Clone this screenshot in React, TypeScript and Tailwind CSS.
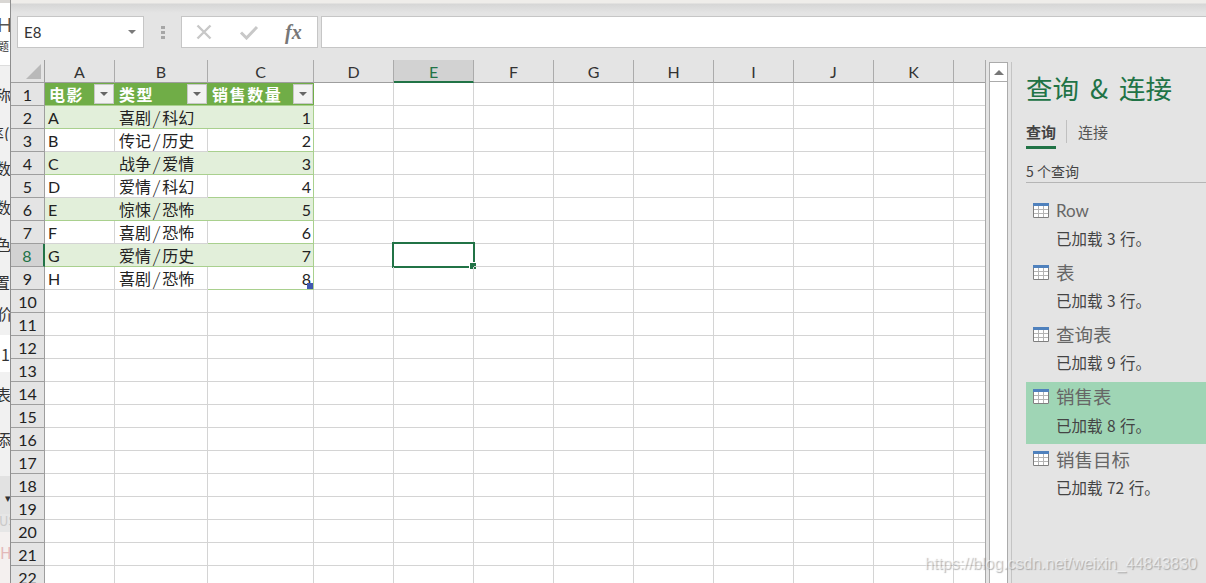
import React from 'react';

const FONT = "font-['Lato','Noto_Sans_CJK_SC',sans-serif]";
const YAHEI = "font-['Noto_Sans_CJK_SC','Noto_Sans',sans-serif]";

const movies = [
  ['A', '喜剧', '科幻', 1],
  ['B', '传记', '历史', 2],
  ['C', '战争', '爱情', 3],
  ['D', '爱情', '科幻', 4],
  ['E', '惊悚', '恐怖', 5],
  ['F', '喜剧', '恐怖', 6],
  ['G', '爱情', '历史', 7],
  ['H', '喜剧', '恐怖', 8],
] as const;

const colLetters = ['A', 'B', 'C', 'D', 'E', 'F', 'G', 'H', 'I', 'J', 'K', ''];

const queries = [
  { name: 'Row', rows: 3 },
  { name: '表', rows: 3 },
  { name: '查询表', rows: 9 },
  { name: '销售表', rows: 8, active: true },
  { name: '销售目标', rows: 72 },
];

// sliver of the window behind Excel, only the cut off edge is visible
const sliver = [
  { h: 'h-[3px]', bg: 'bg-[#d9d7d4]', text: '', cls: '' },
  { h: 'h-[38px]', bg: 'bg-white', text: 'H', cls: "text-[21px] text-[#555] items-end -ml-[3px] pb-[6px] font-['Liberation_Sans',sans-serif]" },
  { h: 'h-[25px]', bg: 'bg-white border-b border-[#ddd]', text: '题', cls: 'text-[11px] text-[#333] -ml-[2px] pb-[8px]' },
  { h: 'h-[37px]', bg: 'bg-[#f1f1f1]', text: '称', cls: 'text-[16px] text-[#333] -ml-[5px] items-end' },
  { h: 'h-[38px]', bg: 'bg-[#f1f1f1]', text: '率(', cls: 'text-[16px] text-[#333] -ml-[12px] items-end' },
  { h: 'h-[35px]', bg: 'bg-[#f1f1f1]', text: '数', cls: 'text-[16px] text-[#333] items-end -ml-[5px]' },
  { h: 'h-[39px]', bg: 'bg-[#f1f1f1]', text: '数', cls: 'text-[16px] text-[#333] items-end -ml-[5px]' },
  { h: 'h-[37px]', bg: 'bg-[#f1f1f1]', text: '色', cls: 'text-[16px] text-[#333] -ml-[5px] items-end' },
  { h: 'h-[38px]', bg: 'bg-[#f1f1f1]', text: '置', cls: 'text-[16px] text-[#333] -ml-[6px] items-end' },
  { h: 'h-[45px]', bg: 'bg-[#f1f1f1]', text: '价', cls: 'text-[16px] text-[#333] items-end -ml-[3px] pb-[14px]' },
  { h: 'h-[37px]', bg: 'bg-white', text: '1', cls: 'text-[16px] text-[#333] -ml-[3px] items-center justify-end' },
  { h: 'h-[30px]', bg: 'bg-[#f1f1f1]', text: '表', cls: 'text-[16px] text-[#333] -ml-[5px] items-end' },
  { h: 'h-[74px]', bg: 'bg-[#f1f1f1]', text: '添', cls: 'text-[16px] text-[#333] -ml-[5px] items-end pb-[29px]' },
  { h: 'h-[38px]', bg: 'bg-[#e2e2e2]', text: '▾', cls: 'text-[11px] text-[#333] pl-[5px] pt-[16px]' },
  { h: 'h-[18px]', bg: 'bg-[#e6e6e6]', text: 'US', cls: 'text-[13px] text-[#c9c9c9] -ml-[1px]' },
  { h: 'h-[51px]', bg: 'bg-[#f4f0ef]', text: 'H', cls: 'text-[16px] text-[#e3b9b9] pt-[12px]' },
];

function Sliver() {
  return (
    <div className={`w-[11px] h-full shrink-0 flex flex-col overflow-hidden border-r border-[#8e8e8e] ${YAHEI}`}>
      {sliver.map((s, i) => (
        <div key={i} className={`${s.h} ${s.bg} shrink-0 overflow-hidden`}>
          <div className={`flex h-full whitespace-nowrap leading-none ${s.cls}`}>{s.text}</div>
        </div>
      ))}
    </div>
  );
}

function TableIcon() {
  return (
    <svg width="16" height="15" viewBox="0 0 16 15" className="shrink-0">
      <rect x="0" y="0" width="16" height="15" fill="#fff" />
      <path d="M5.5 3v11M10.5 3v11M1 6.5h14M1 10.5h14" fill="none" stroke="#b4b4b4" />
      <path d="M.5 3v11.5h15V3" fill="none" stroke="#7f7f7f" />
      <rect x="0" y="0" width="16" height="3" fill="#4f81bd" />
    </svg>
  );
}

function FilterButton() {
  return (
    <div className="w-[20px] h-[20px] bg-[#f2f2f2] border border-[#c8c8c8] flex items-center justify-center shrink-0">
      <div className="w-0 h-0 border-l-[4px] border-r-[4px] border-t-[4px] border-l-transparent border-r-transparent border-t-[#666]" />
    </div>
  );
}

function FormulaBar() {
  return (
    <div className="h-[60px] shrink-0 bg-[#e4e4e4] flex flex-col">
      <div className="h-[16px] shrink-0 bg-[linear-gradient(to_bottom,#efedea_0,#efedea_3px,#d6d6d6_4px,#e4e4e4_13px)]" />
      <div className="h-[32px] flex items-stretch pl-[6px]">
        <div className={`w-[127px] bg-white border border-[#c6c6c6] flex items-center justify-between pl-[6px] pr-[7px] text-[15px] text-[#333] ${FONT}`}>
          E8
          <div className="w-0 h-0 border-l-[4px] border-r-[4px] border-t-[4px] border-l-transparent border-r-transparent border-t-[#7a7a7a]" />
        </div>
        <div className="w-[37px] flex flex-col items-center justify-center gap-[2px]">
          <span className="w-[4px] h-[3px] bg-[#a6a6a6]" />
          <span className="w-[4px] h-[3px] bg-[#a6a6a6]" />
          <span className="w-[4px] h-[3px] bg-[#a6a6a6]" />
        </div>
        <div className="w-[137px] bg-white border border-[#c6c6c6] flex items-center pl-[14px]">
          <svg width="16" height="16" viewBox="0 0 16 16" className="shrink-0">
            <path d="M1.5 1.5 14.5 14.5M14.5 1.5 1.5 14.5" stroke="#c8c8c8" strokeWidth="2.4" fill="none" />
          </svg>
          <svg width="20" height="16" viewBox="0 0 20 16" className="ml-[27px] shrink-0">
            <path d="M2 8.5 7.5 14 18 3" stroke="#c8c8c8" strokeWidth="3" fill="none" />
          </svg>
          <span className="ml-[26px] font-['Liberation_Serif',serif] italic font-bold text-[20px] leading-none text-[#777]">fx</span>
        </div>
        <div className="ml-[3px] flex-1 bg-white border-y border-l border-[#c6c6c6]" />
      </div>
    </div>
  );
}

function Sheet() {
  const rowNums = Array.from({ length: 22 }, (_, i) => i + 1);
  return (
    <div className={`w-[975px] h-full shrink-0 grid grid-cols-[34px_70px_93px_106px_repeat(8,80px)_32px] auto-rows-[23px] bg-white border-r border-[#a9a9a9] text-[16px] text-[#222] leading-none overflow-hidden ${FONT}`}>
      {/* column header row */}
      <div className="bg-[#e4e4e4] border-r border-b border-[#9e9e9e] flex items-end justify-end pr-[3px] pb-[3px]">
        <div className="w-0 h-0 border-l-[15px] border-t-[15px] border-l-transparent border-t-transparent border-r-[15px] border-r-[#b9b9b9]" />
      </div>
      {colLetters.map((c, i) => (
        <div
          key={i}
          className={
            c === 'E'
              ? 'bg-[#d2d2d2] border-r border-[#ababab] border-b-2 border-b-[#217346] text-[#217346] flex items-center justify-center pt-[2px]'
              : 'bg-[#e4e4e4] border-r border-[#ababab] border-b border-b-[#9e9e9e] text-[#333] flex items-center justify-center pt-[2px]'
          }
        >
          {c}
        </div>
      ))}

      {rowNums.map((n) => {
        const movie = movies[n - 2];
        const band = n >= 2 && n <= 9 && n % 2 === 0;
        const inTable = n >= 1 && n <= 9;
        const tableCell = band
          ? 'bg-[#e2efda] border-b border-[#a9d08e]'
          : inTable
            ? 'bg-white border-b border-[#a9d08e]'
            : 'bg-white border-b border-[#d4d4d4]';
        const inner = band ? '' : 'border-r border-[#d4d4d4]';
        return (
          <React.Fragment key={n}>
            <div
              className={
                n === 8
                  ? 'bg-[#d2d2d2] border-b border-[#9e9e9e] border-r-2 border-r-[#217346] text-[#217346] flex items-center justify-center pt-[2px]'
                  : 'bg-[#e4e4e4] border-r border-b border-[#9e9e9e] text-[#222] flex items-center justify-center pt-[2px]'
              }
            >
              {n}
            </div>
            {n === 1 ? (
              <>
                {['电影', '类型', '销售数量'].map((h) => (
                  <div key={h} className="bg-[#70ad47] border-b border-[#a9d08e] flex items-center justify-between pl-[4px] pr-[1px] text-white font-bold tracking-[1.6px]">
                    <span className="pt-[2px]">{h}</span>
                    <FilterButton />
                  </div>
                ))}
              </>
            ) : movie ? (
              <>
                <div className={`${tableCell} ${inner} flex items-center pl-[3px] pt-[2px]`}>{movie[0]}</div>
                <div className={`${tableCell} ${inner} flex items-center pl-[4px] pt-[2px]`}>
                  {movie[1]}
                  <span className="mx-[1px] text-[21px] font-light">/</span>
                  {movie[2]}
                </div>
                <div className={`${tableCell} border-r border-r-[#a9d08e] relative flex items-center justify-end pr-[2px] pt-[2px]`}>
                  {movie[3]}
                  {n === 9 && <span className="absolute right-0 bottom-0 w-[6px] h-[6px] bg-[#4058b0]" />}
                </div>
              </>
            ) : (
              <>
                <div className="border-r border-b border-[#d4d4d4]" />
                <div className="border-r border-b border-[#d4d4d4]" />
                <div className="border-r border-b border-[#d4d4d4]" />
              </>
            )}
            {colLetters.slice(3).map((c) => (
              <div key={c} className="border-r border-b border-[#d4d4d4] relative">
                {c === 'E' && n === 8 && (
                  <>
                    <div className="absolute -left-[2px] -top-[2px] -right-[2px] -bottom-[2px] border-2 border-[#217346]" />
                    <div className="absolute -right-[3px] -bottom-[3px] w-[6px] h-[6px] bg-[#217346] outline outline-1 outline-white" />
                  </>
                )}
              </div>
            ))}
          </React.Fragment>
        );
      })}
    </div>
  );
}

function ScrollBar() {
  return (
    <div className="ml-[3px] mr-[3px] w-[19px] h-full shrink-0 pt-[2px] flex flex-col">
      <div className="h-[20px] shrink-0 bg-white border border-[#ababab] flex items-center justify-center">
        <div className="w-0 h-0 border-l-[5px] border-r-[5px] border-b-[5px] border-l-transparent border-r-transparent border-b-[#777]" />
      </div>
      <div className="flex-1 bg-white border-x border-[#ababab]" />
    </div>
  );
}

function QueryPanel() {
  return (
    <div className={`flex-1 h-full min-w-0 pt-[2px] ${YAHEI}`}>
      <div className="h-full border-l border-[#c4c4c4] pl-[14px] pt-[9px]">
        <h2 className="text-[26.5px] leading-[34px] text-[#217346] whitespace-nowrap [word-spacing:5px]">查询 &amp; 连接</h2>
        <div className="mt-[15px] flex items-start h-[28px]">
          <div className="w-[30px]">
            <div className="text-[15px] leading-[24px] font-bold text-[#444]">查询</div>
            <div className="mt-[2px] h-[3px] bg-[#217346]" />
          </div>
          <div className="ml-[10px] w-px h-[23px] bg-[#c0c0c0]" />
          <div className="ml-[11px] text-[15px] leading-[24px] text-[#555]">连接</div>
        </div>
        <div className="mt-[9px] h-[26px] pt-[4px] text-[14px] leading-[20px] text-[#444] border-b border-[#b5b5b5]">5 个查询</div>
        <div className="mt-[-1px]">
          <div className="h-[13px]" />
          {queries.map((q) => (
            <div key={q.name} className={`h-[62.2px] pl-[7px] pt-[1px] ${q.active ? 'bg-[#9fd5b5]' : ''}`}>
              <div className="flex items-center gap-[7px] h-[28px]">
                <TableIcon />
                <span className={`leading-none text-[#666] ${q.name === 'Row' ? "text-[17px] font-['Lato',sans-serif]" : 'text-[18.5px]'}`}>{q.name}</span>
              </div>
              <div className="ml-[23px] mt-[4px] text-[15.5px] leading-[20px] text-[#444] whitespace-nowrap [word-spacing:1px]">已加载 {q.rows} 行。</div>
            </div>
          ))}
        </div>
      </div>
    </div>
  );
}

export default function App() {
  return (
    <div className="relative w-[1206px] h-[583px] flex overflow-hidden bg-[#e4e4e4]">
      <Sliver />
      <div className="flex-1 min-w-0 flex flex-col">
        <FormulaBar />
        <div className="flex-1 min-h-0 flex">
          <Sheet />
          <ScrollBar />
          <QueryPanel />
        </div>
      </div>
      {/* csdn watermark */}
      <div className="absolute right-[9px] bottom-[11px] font-['Liberation_Sans',sans-serif] text-[16px] leading-none text-white/50 [text-shadow:1px_1px_1px_rgba(110,110,110,0.5)]">
        https://blog.csdn.net/weixin_44843830
      </div>
    </div>
  );
}
